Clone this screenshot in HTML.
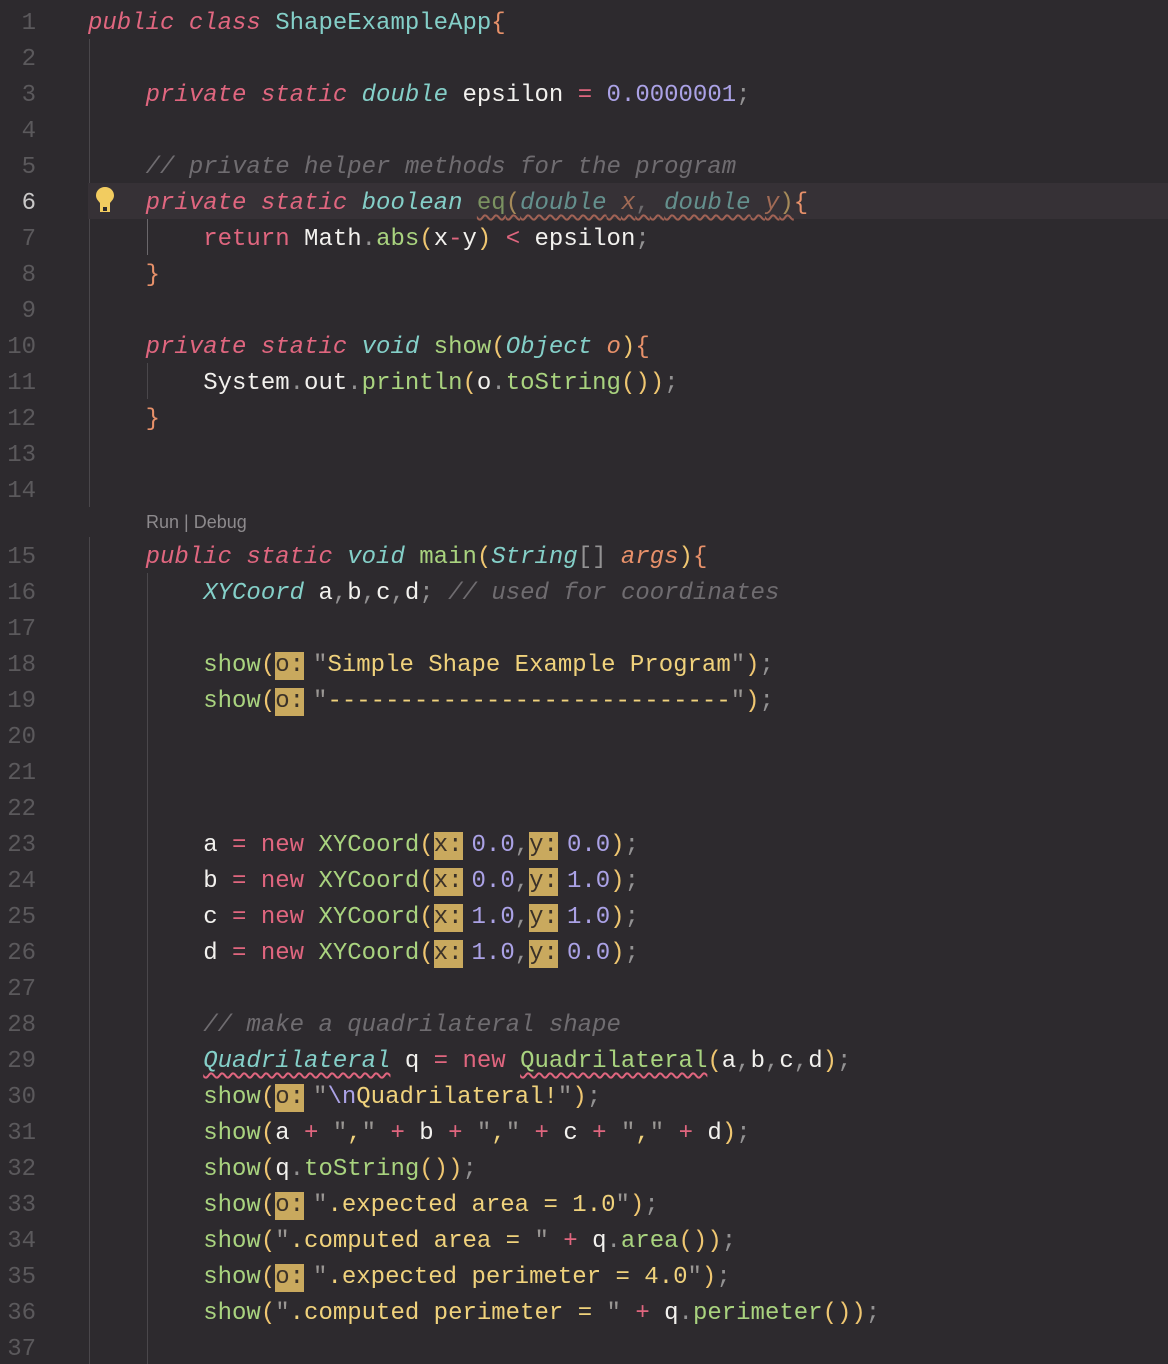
<!DOCTYPE html>
<html><head><meta charset="utf-8"><style>
html,body{margin:0;padding:0;background:#2d2a2e;width:1168px;height:1364px;overflow:hidden}
body{position:relative;font-family:"Liberation Mono",monospace;font-size:24px;color:#f2f1ee}
.l{position:absolute;left:0;width:1168px;height:36px;line-height:36px;white-space:pre;margin-top:6px}
.n{position:absolute;left:0;width:36px;text-align:right;color:#5b595c}
.cur .n{color:#c9c8c8}
.code{position:absolute;left:88px}
.k{color:#e0667f;font-style:italic}
.r{color:#e0667f}
.t{color:#84cfc8;font-style:italic}
.c{color:#6f6c70;font-style:italic}
.f{color:#a9d37f}
.s{color:#f0d27c}
.q{color:#9a9794}
.nu{color:#aba2e6}
.p{color:#939293}
.b{color:#efc671}
.o{color:#e0667f}
.br{color:#e8916a}
.pa{color:#e8916a;font-style:italic}
.h{background:#c9a95e;color:#3a3128;display:inline-block;height:28px;line-height:28px;vertical-align:top;margin-top:4px;margin-right:9px}
.sq{text-decoration:underline wavy #e8846a;text-decoration-thickness:1.5px;text-underline-offset:5px}
.dim{opacity:.6}
.g{position:absolute;width:1px;background:#4a474b}
.lens{position:absolute;left:146px;top:507px;height:30px;line-height:30px;font-family:"Liberation Sans",sans-serif;font-size:18px;color:#8d8a8d}
</style></head><body>
<div class="g" style="left:89px;top:39px;height:468px"></div>
<div class="g" style="left:89px;top:537px;height:827px"></div>
<div class="g" style="left:147px;top:219px;height:36px;background:#6a676b"></div>
<div class="g" style="left:147px;top:363px;height:36px"></div>
<div class="g" style="left:147px;top:573px;height:791px"></div>
<div style="position:absolute;left:88px;top:183px;width:1080px;height:36px;background:#363136"></div>
<svg style="position:absolute;left:94px;top:186px" width="22" height="28" viewBox="0 0 22 28"><path d="M11 1C5.5 1 2 5 2 9.5c0 3.5 2.5 5.5 4 7.5l0 3h10l0-3c1.5-2 4-4 4-7.5C20 5 16.5 1 11 1z" fill="#f2cc60"/><rect x="6" y="20" width="10" height="6" fill="#f2cc60"/><rect x="9" y="21" width="4" height="4" fill="#2d2a2e"/></svg>
<div class="lens">Run | Debug</div>

<div class="l" style="top:0px"><span class="n">1</span><span class="code"><span class="k">public class</span> <span class="t" style="font-style:normal">ShapeExampleApp</span><span class="br">{</span></span></div>
<div class="l" style="top:36px"><span class="n">2</span></div>
<div class="l" style="top:72px"><span class="n">3</span><span class="code">    <span class="k">private static</span> <span class="t">double</span> epsilon <span class="o">=</span> <span class="nu">0.0000001</span><span class="p">;</span></span></div>
<div class="l" style="top:108px"><span class="n">4</span></div>
<div class="l" style="top:144px"><span class="n">5</span><span class="code">    <span class="c">// private helper methods for the program</span></span></div>
<div class="l cur" style="top:180px"><span class="n">6</span><span class="code">    <span class="k">private static</span> <span class="t">boolean</span> <span class="sq"><span class="dim"><span class="f">eq</span><span class="b">(</span><span class="t">double</span> <span class="pa">x</span><span class="p">,</span> <span class="t">double</span> <span class="pa">y</span><span class="b">)</span></span></span><span class="br">{</span></span></div>
<div class="l" style="top:216px"><span class="n">7</span><span class="code">        <span class="r">return</span> Math<span class="p">.</span><span class="f">abs</span><span class="b">(</span>x<span class="o">-</span>y<span class="b">)</span> <span class="o">&lt;</span> epsilon<span class="p">;</span></span></div>
<div class="l" style="top:252px"><span class="n">8</span><span class="code">    <span class="br">}</span></span></div>
<div class="l" style="top:288px"><span class="n">9</span></div>
<div class="l" style="top:324px"><span class="n">10</span><span class="code">    <span class="k">private static</span> <span class="t">void</span> <span class="f">show</span><span class="b">(</span><span class="t">Object</span> <span class="pa">o</span><span class="b">)</span><span class="br">{</span></span></div>
<div class="l" style="top:360px"><span class="n">11</span><span class="code">        System<span class="p">.</span>out<span class="p">.</span><span class="f">println</span><span class="b">(</span>o<span class="p">.</span><span class="f">toString</span><span class="b">())</span><span class="p">;</span></span></div>
<div class="l" style="top:396px"><span class="n">12</span><span class="code">    <span class="br">}</span></span></div>
<div class="l" style="top:432px"><span class="n">13</span></div>
<div class="l" style="top:468px"><span class="n">14</span></div>

<div class="l" style="top:534px"><span class="n">15</span><span class="code">    <span class="k">public static</span> <span class="t">void</span> <span class="f">main</span><span class="b">(</span><span class="t">String</span><span class="p">[]</span> <span class="pa">args</span><span class="b">)</span><span class="br">{</span></span></div>
<div class="l" style="top:570px"><span class="n">16</span><span class="code">        <span class="t">XYCoord</span> a<span class="p">,</span>b<span class="p">,</span>c<span class="p">,</span>d<span class="p">;</span> <span class="c">// used for coordinates</span></span></div>
<div class="l" style="top:606px"><span class="n">17</span></div>
<div class="l" style="top:642px"><span class="n">18</span><span class="code">        <span class="f">show</span><span class="b">(</span><span class="h">o:</span><span class="q">"</span><span class="s">Simple Shape Example Program</span><span class="q">"</span><span class="b">)</span><span class="p">;</span></span></div>
<div class="l" style="top:678px"><span class="n">19</span><span class="code">        <span class="f">show</span><span class="b">(</span><span class="h">o:</span><span class="q">"</span><span class="s">----------------------------</span><span class="q">"</span><span class="b">)</span><span class="p">;</span></span></div>
<div class="l" style="top:714px"><span class="n">20</span></div>
<div class="l" style="top:750px"><span class="n">21</span></div>
<div class="l" style="top:786px"><span class="n">22</span></div>
<div class="l" style="top:822px"><span class="n">23</span><span class="code">        a <span class="o">=</span> <span class="r">new</span> <span class="f">XYCoord</span><span class="b">(</span><span class="h">x:</span><span class="nu">0.0</span><span class="p">,</span><span class="h">y:</span><span class="nu">0.0</span><span class="b">)</span><span class="p">;</span></span></div>
<div class="l" style="top:858px"><span class="n">24</span><span class="code">        b <span class="o">=</span> <span class="r">new</span> <span class="f">XYCoord</span><span class="b">(</span><span class="h">x:</span><span class="nu">0.0</span><span class="p">,</span><span class="h">y:</span><span class="nu">1.0</span><span class="b">)</span><span class="p">;</span></span></div>
<div class="l" style="top:894px"><span class="n">25</span><span class="code">        c <span class="o">=</span> <span class="r">new</span> <span class="f">XYCoord</span><span class="b">(</span><span class="h">x:</span><span class="nu">1.0</span><span class="p">,</span><span class="h">y:</span><span class="nu">1.0</span><span class="b">)</span><span class="p">;</span></span></div>
<div class="l" style="top:930px"><span class="n">26</span><span class="code">        d <span class="o">=</span> <span class="r">new</span> <span class="f">XYCoord</span><span class="b">(</span><span class="h">x:</span><span class="nu">1.0</span><span class="p">,</span><span class="h">y:</span><span class="nu">0.0</span><span class="b">)</span><span class="p">;</span></span></div>
<div class="l" style="top:966px"><span class="n">27</span></div>
<div class="l" style="top:1002px"><span class="n">28</span><span class="code">        <span class="c">// make a quadrilateral shape</span></span></div>
<div class="l" style="top:1038px"><span class="n">29</span><span class="code">        <span class="t sq" style="text-decoration-color:#e0667f">Quadrilateral</span> q <span class="o">=</span> <span class="r">new</span> <span class="f sq" style="text-decoration-color:#e0667f">Quadrilateral</span><span class="b">(</span>a<span class="p">,</span>b<span class="p">,</span>c<span class="p">,</span>d<span class="b">)</span><span class="p">;</span></span></div>
<div class="l" style="top:1074px"><span class="n">30</span><span class="code">        <span class="f">show</span><span class="b">(</span><span class="h">o:</span><span class="q">"</span><span class="nu">\n</span><span class="s">Quadrilateral!</span><span class="q">"</span><span class="b">)</span><span class="p">;</span></span></div>
<div class="l" style="top:1110px"><span class="n">31</span><span class="code">        <span class="f">show</span><span class="b">(</span>a <span class="o">+</span> <span class="q">"</span><span class="s">,</span><span class="q">"</span> <span class="o">+</span> b <span class="o">+</span> <span class="q">"</span><span class="s">,</span><span class="q">"</span> <span class="o">+</span> c <span class="o">+</span> <span class="q">"</span><span class="s">,</span><span class="q">"</span> <span class="o">+</span> d<span class="b">)</span><span class="p">;</span></span></div>
<div class="l" style="top:1146px"><span class="n">32</span><span class="code">        <span class="f">show</span><span class="b">(</span>q<span class="p">.</span><span class="f">toString</span><span class="b">())</span><span class="p">;</span></span></div>
<div class="l" style="top:1182px"><span class="n">33</span><span class="code">        <span class="f">show</span><span class="b">(</span><span class="h">o:</span><span class="q">"</span><span class="s">.expected area = 1.0</span><span class="q">"</span><span class="b">)</span><span class="p">;</span></span></div>
<div class="l" style="top:1218px"><span class="n">34</span><span class="code">        <span class="f">show</span><span class="b">(</span><span class="q">"</span><span class="s">.computed area = </span><span class="q">"</span> <span class="o">+</span> q<span class="p">.</span><span class="f">area</span><span class="b">())</span><span class="p">;</span></span></div>
<div class="l" style="top:1254px"><span class="n">35</span><span class="code">        <span class="f">show</span><span class="b">(</span><span class="h">o:</span><span class="q">"</span><span class="s">.expected perimeter = 4.0</span><span class="q">"</span><span class="b">)</span><span class="p">;</span></span></div>
<div class="l" style="top:1290px"><span class="n">36</span><span class="code">        <span class="f">show</span><span class="b">(</span><span class="q">"</span><span class="s">.computed perimeter = </span><span class="q">"</span> <span class="o">+</span> q<span class="p">.</span><span class="f">perimeter</span><span class="b">())</span><span class="p">;</span></span></div>
<div class="l" style="top:1326px"><span class="n">37</span></div>
</body></html>
